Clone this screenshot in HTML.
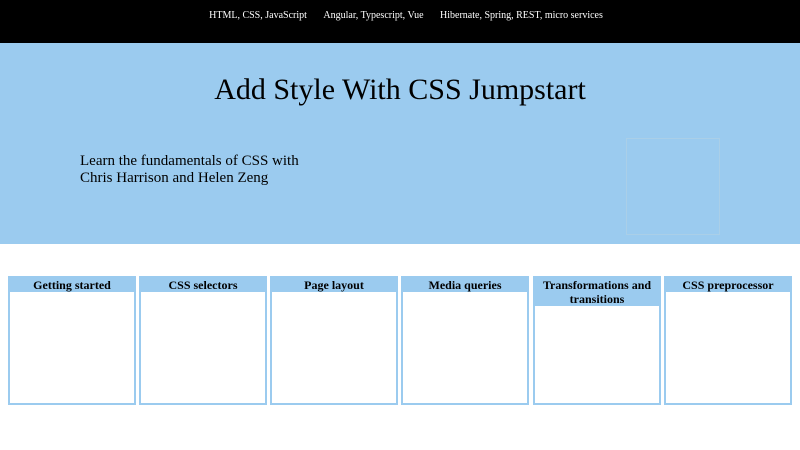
<!DOCTYPE html>
<html><head><style>
body{margin:0;width:800px;height:450px;background:#fff;font-family:"Liberation Serif",serif;overflow:hidden;position:relative}
.nav{position:absolute;top:0;left:0;width:800px;height:43px;background:#000;color:#fff;font-size:10px;text-align:center;line-height:31px;box-sizing:border-box;padding-left:12px}
.nav span{margin:0 7px}
.hero{position:absolute;top:43px;left:0;width:800px;height:201px;background:#9bcbef}
h1{position:absolute;top:72px;left:0;width:800px;margin:0;text-align:center;font-weight:normal;font-size:30px;line-height:36px}
.sub{position:absolute;top:153px;left:80px;font-size:15px;line-height:17px}
.img{position:absolute;left:626px;top:138px;width:92px;height:95px;border:1px solid #aacfe8}
.card{position:absolute;top:276px;width:124px;height:125px;border:2px solid #9bcbef;background:#fff}
.card div{background:#9bcbef;font-weight:bold;font-size:12px;text-align:center;line-height:14px;padding-bottom:0}
</style></head><body>
<div class="nav"><span>HTML, CSS, JavaScript</span> <span>Angular, Typescript, Vue</span> <span>Hibernate, Spring, REST, micro services</span></div>
<div class="hero"></div>
<h1>Add Style With CSS Jumpstart</h1>
<div class="sub">Learn the fundamentals of CSS with<br>Chris Harrison and Helen Zeng</div>
<div class="img"></div>
<div class="card" style="left:8px"><div>Getting started</div></div>
<div class="card" style="left:139px"><div>CSS selectors</div></div>
<div class="card" style="left:270px"><div>Page layout</div></div>
<div class="card" style="left:401px"><div>Media queries</div></div>
<div class="card" style="left:533px"><div>Transformations and transitions</div></div>
<div class="card" style="left:664px"><div>CSS preprocessor</div></div>
</body></html>
